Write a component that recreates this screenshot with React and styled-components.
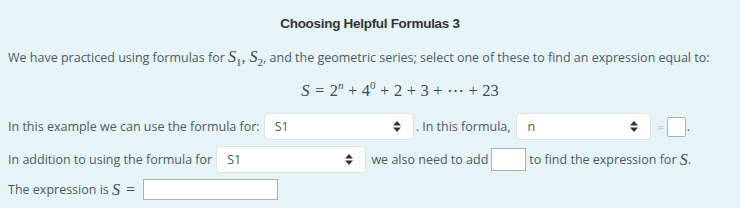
import styled, { createGlobalStyle } from "styled-components";

const GlobalStyle = createGlobalStyle`
  html, body {
    margin: 0;
    padding: 0;
    background: #ffffff;
  }
`;

const Panel = styled.div`
  width: 740px;
  height: 208px;
  box-sizing: border-box;
  background: #e6f4f7;
  padding: 14px 8px 0 8px;
  font-family: "Open Sans", "Liberation Sans", sans-serif;
  font-size: 12.5px;
  color: #4d5a66;
`;

const Title = styled.h2`
  margin: 0;
  height: 20px;
  text-align: center;
  font-family: "Liberation Sans", Arial, sans-serif;
  font-size: 13.5px;
  letter-spacing: -0.3px;
  font-weight: bold;
  color: #333333;
  line-height: 20px;
`;

const Para = styled.p`
  margin: 13px 0 0 0;
  line-height: 20px;
  white-space: nowrap;
`;

const MathDisplay = styled.div`
  margin: 3px 0 0 0;
  padding-left: 60px;
  display: flex;
  justify-content: center;
  align-items: baseline;
  line-height: 20px;
  font-family: "Liberation Serif", "Times New Roman", serif;
  font-size: 16.5px;
  color: #3d4a57;
`;

const Op = styled.span`
  margin: 0 ${(p) => p.$gap || 4.5}px;
`;

const M = styled.span`
  font-family: "Liberation Serif", "Times New Roman", serif;
  font-size: 16px;
  color: #3d4a57;
  font-style: ${(p) => (p.$upright ? "normal" : "italic")};
  margin: 0 ${(p) => p.$gap || 0}px;
`;

const Sup = styled.sup`
  font-size: 11px;
  font-style: ${(p) => (p.$italic ? "italic" : "normal")};
`;

const Sub = styled.sub`
  font-size: 11px;
  font-style: normal;
`;

const Row = styled.div`
  display: flex;
  align-items: center;
  white-space: nowrap;
  height: ${(p) => p.$h || 28}px;
  margin-top: ${(p) => p.$mt || 0}px;
`;

const SelectBox = styled.div`
  box-sizing: border-box;
  width: ${(p) => p.$w}px;
  height: 27px;
  margin: 0 ${(p) => p.$mr ?? 2}px 0 ${(p) => p.$ml ?? 4}px;
  padding: 0 10px;
  display: flex;
  align-items: center;
  justify-content: space-between;
  background: #ffffff;
  border: 1px solid #dde3e6;
  border-radius: 4px;
  color: #555555;
  font-size: 12.5px;
`;

const Arrows = styled.svg`
  width: 8px;
  height: 11px;
  margin-right: 2px;
`;

const Input = styled.div`
  box-sizing: border-box;
  width: ${(p) => p.$w}px;
  height: ${(p) => p.$h || 22}px;
  margin: 0 ${(p) => p.$mr ?? 3}px 0 ${(p) => p.$ml ?? 2}px;
  background: #ffffff;
  border: 1px solid #a9afb4;
  border-radius: ${(p) => p.$r || 0}px;
`;

const SmallEq = styled.span`
  font-size: 11px;
  color: #8fb3c6;
  margin: 0 2px 0 4px;
`;

const Select = ({ value, w, ml, mr }) => (
  <SelectBox $w={w} $ml={ml} $mr={mr}>
    <span>{value}</span>
    <Arrows viewBox="0 0 8 11">
      <path d="M4 0 L8 4.5 L0 4.5 Z M4 11 L8 6.5 L0 6.5 Z" fill="#333" />
    </Arrows>
  </SelectBox>
);

const App = () => (
  <Panel>
    <GlobalStyle />
    <Title>Choosing Helpful Formulas 3</Title>
    <Para>
      We have practiced using formulas for <M>S</M>
      <M $upright>
        <Sub>1</Sub>,{" "}
      </M>
      <M>S</M>
      <M $upright>
        <Sub>2</Sub>
      </M>
      , and the geometric series; select one of these to find an expression
      equal to:
    </Para>
    <MathDisplay>
      <i>S</i>
      <Op $gap={5.5}>=</Op>
      <span>
        2<Sup $italic>n</Sup>
      </span>
      <Op>+</Op>
      <span>
        4<Sup>0</Sup>
      </span>
      <Op>+</Op>2<Op>+</Op>3<Op>+</Op>⋯<Op>+</Op>23
    </MathDisplay>
    <Row $mt={12}>
      In this example we can use the formula for:
      <Select value="S1" w={150} />
      . In this formula,
      <Select value="n" w={135} ml={6} />
      <SmallEq>=</SmallEq>
      <Input $w={19} $h={20} $r={2} $ml={1} $mr={1} />.
    </Row>
    <Row $mt={5}>
      In addition to using the formula for
      <Select value="S1" w={150} />
      &nbsp;we also need to add
      <Input $w={35} $h={23} $ml={3} $mr={3} />
      to find the expression for&nbsp;<M>S</M>.
    </Row>
    <Row $mt={3} $h={26}>
      The expression is&nbsp;<M>S</M>
      <M $upright $gap={6}>=</M>
      <Input $w={135} $h={21} $ml={2} />
    </Row>
  </Panel>
);

export default App;
